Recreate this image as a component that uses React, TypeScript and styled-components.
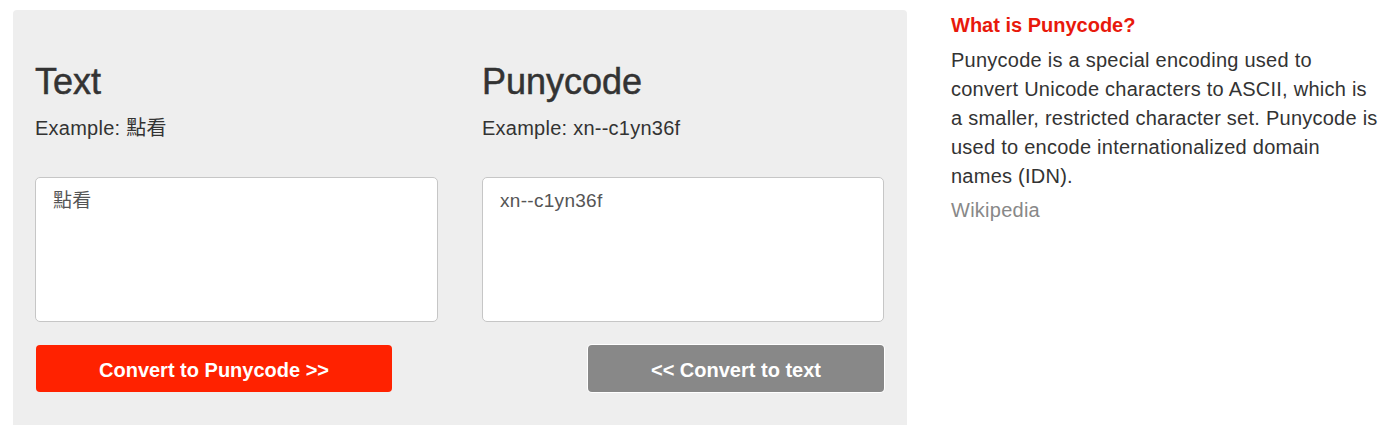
import React from "react";
import styled, { createGlobalStyle } from "styled-components";

const GlobalStyle = createGlobalStyle`
  body {
    margin: 0;
    background: #ffffff;
    font-family: "Liberation Sans", Arial, "Noto Sans CJK TC", sans-serif;
    color: #333333;
  }
`;

export default function App() {
  return (
    <>
      <GlobalStyle />
      <Page>
        {/* Converter panel */}
        <Panel>
          <Column>
            <Heading>Text</Heading>
            <Example>Example: 點看</Example>
            <Field defaultValue="點看" />
            <ActionButton $variant="primary">Convert to Punycode &gt;&gt;</ActionButton>
          </Column>
          <Column>
            <Heading>Punycode</Heading>
            <Example>Example: xn--c1yn36f</Example>
            <Field defaultValue="xn--c1yn36f" />
            <ActionButton $variant="secondary">&lt;&lt; Convert to text</ActionButton>
          </Column>
        </Panel>

        {/* Sidebar */}
        <Sidebar>
          <SideTitle>What is Punycode?</SideTitle>
          <SideText>
            Punycode is a special encoding used to convert Unicode characters to ASCII, which is a
            smaller, restricted character set. Punycode is used to encode internationalized domain
            names (IDN).
          </SideText>
          <SourceLink href="#">Wikipedia</SourceLink>
        </Sidebar>
      </Page>
    </>
  );
}

// --- Styles ---

const Page = styled.div`
  display: flex;
  align-items: flex-start;
  gap: 44px;
  padding: 10px 0 0 13px;
`;

const Panel = styled.section`
  box-sizing: border-box;
  width: 894px;
  min-height: 420px;
  padding: 52px 23px 40px 22px;
  background: #eeeeee;
  border-radius: 4px 4px 0 0;
  display: grid;
  grid-template-columns: 403px 402px;
  column-gap: 44px;
`;

const Column = styled.div`
  display: flex;
  flex-direction: column;
`;

const Heading = styled.h2`
  margin: 0;
  font-size: 36px;
  line-height: 40px;
  font-weight: 400;
  color: #333333;
  -webkit-text-stroke: 0.5px #333333;
`;

const Example = styled.p`
  margin: 12px 0 0;
  font-size: 20px;
  line-height: 29px;
  letter-spacing: 0.25px;
  color: #333333;
`;

const Field = styled.textarea`
  box-sizing: border-box;
  width: 100%;
  height: 145px;
  margin-top: 34px;
  padding: 10px 17px;
  border: 1px solid #c6c6c6;
  border-radius: 5px;
  background: #ffffff;
  font-family: "Liberation Sans", Arial, "Noto Sans CJK TC", sans-serif;
  font-size: 19px;
  line-height: 26px;
  letter-spacing: 0.3px;
  color: #555555;
  resize: none;
  outline: none;
`;

const ActionButton = styled.button<{ $variant: "primary" | "secondary" }>`
  align-self: ${(p) => (p.$variant === "primary" ? "flex-start" : "flex-end")};
  height: 47px;
  margin-top: 23px;
  margin-left: ${(p) => (p.$variant === "primary" ? "1px" : "0")};
  padding: 3px 63px 0;
  border: none;
  border-radius: 4px;
  background: ${(p) => (p.$variant === "primary" ? "#ff2200" : "#888888")};
  box-shadow: ${(p) => (p.$variant === "primary" ? "none" : "0 0 0 1px #ffffff")};
  color: #ffffff;
  font-family: "Liberation Sans", Arial, sans-serif;
  font-size: 20px;
  font-weight: 700;
  cursor: pointer;
`;

const Sidebar = styled.aside`
  width: 427px;
  padding-top: 3px;
`;

const SideTitle = styled.h3`
  margin: 0;
  font-size: 20px;
  line-height: 24px;
  font-weight: 700;
  color: #e8190c;
`;

const SideText = styled.p`
  margin: 9px 0 0;
  font-size: 20px;
  line-height: 29px;
  letter-spacing: 0.25px;
  color: #333333;
`;

const SourceLink = styled.a`
  display: block;
  margin-top: 5px;
  font-size: 20px;
  line-height: 29px;
  letter-spacing: 0.25px;
  color: #888888;
  text-decoration: none;
`;
